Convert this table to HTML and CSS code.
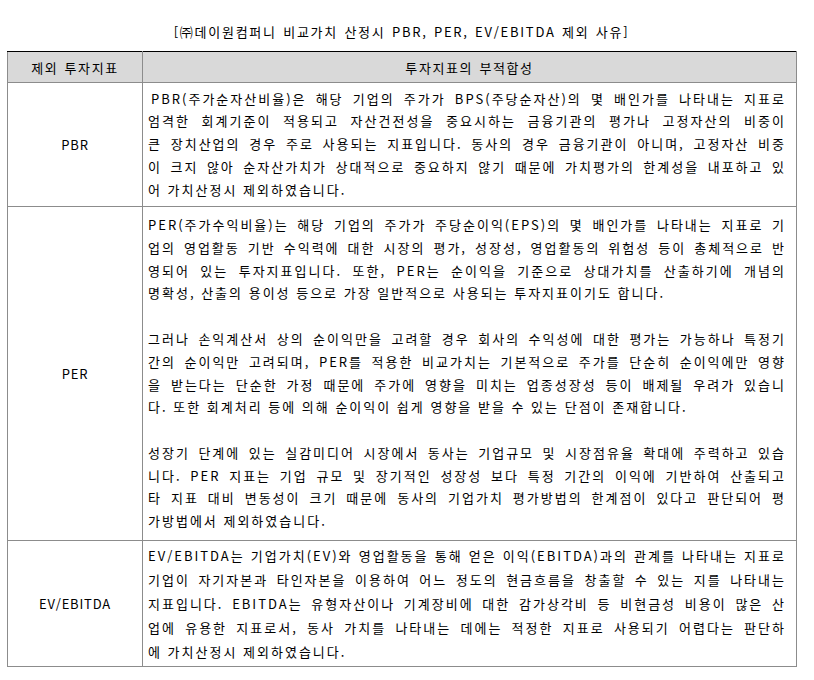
FILE: index.html
```html
<!DOCTYPE html>
<html lang="ko">
<head>
<meta charset="utf-8">
<title>비교가치 산정시 제외 사유</title>
<link rel="stylesheet" href="styles.css">
</head>
<body>
<div class="page">
  <h1 class="title">[㈜데이원컴퍼니 비교가치 산정시 PBR, PER, EV/EBITDA 제외 사유]</h1>
  <table class="grid">
    <colgroup><col class="c1"><col class="c2"></colgroup>
    <thead>
      <tr><th>제외 투자지표</th><th>투자지표의 부적합성</th></tr>
    </thead>
    <tbody>
      <tr class="r-pbr">
        <td class="name">PBR</td>
        <td class="desc">
          <p><span class="ln full indent">PBR(주가순자산비율)은 해당 기업의 주가가 BPS(주당순자산)의 몇 배인가를 나타내는 지표로</span><span class="ln full">엄격한 회계기준이 적용되고 자산건전성을 중요시하는 금융기관의 평가나 고정자산의 비중이</span><span class="ln full">큰 장치산업의 경우 주로 사용되는 지표입니다. 동사의 경우 금융기관이 아니며, 고정자산 비중</span><span class="ln full">이 크지 않아 순자산가치가 상대적으로 중요하지 않기 때문에 가치평가의 한계성을 내포하고 있</span><span class="ln">어 가치산정시 제외하였습니다.</span></p>
        </td>
      </tr>
      <tr class="r-per">
        <td class="name">PER</td>
        <td class="desc">
          <p><span class="ln full">PER(주가수익비율)는 해당 기업의 주가가 주당순이익(EPS)의 몇 배인가를 나타내는 지표로 기</span><span class="ln full">업의 영업활동 기반 수익력에 대한 시장의 평가, 성장성, 영업활동의 위험성 등이 총체적으로 반</span><span class="ln full">영되어 있는 투자지표입니다. 또한, PER는 순이익을 기준으로 상대가치를 산출하기에 개념의</span><span class="ln">명확성, 산출의 용이성 등으로 가장 일반적으로 사용되는 투자지표이기도 합니다.</span></p>
          <p><span class="ln full">그러나 손익계산서 상의 순이익만을 고려할 경우 회사의 수익성에 대한 평가는 가능하나 특정기</span><span class="ln full">간의 순이익만 고려되며, PER를 적용한 비교가치는 기본적으로 주가를 단순히 순이익에만 영향</span><span class="ln full">을 받는다는 단순한 가정 때문에 주가에 영향을 미치는 업종성장성 등이 배제될 우려가 있습니</span><span class="ln">다. 또한 회계처리 등에 의해 순이익이 쉽게 영향을 받을 수 있는 단점이 존재합니다.</span></p>
          <p><span class="ln full">성장기 단계에 있는 실감미디어 시장에서 동사는 기업규모 및 시장점유율 확대에 주력하고 있습</span><span class="ln full">니다. PER 지표는 기업 규모 및 장기적인 성장성 보다 특정 기간의 이익에 기반하여 산출되고</span><span class="ln full">타 지표 대비 변동성이 크기 때문에 동사의 기업가치 평가방법의 한계점이 있다고 판단되어 평</span><span class="ln">가방법에서 제외하였습니다.</span></p>
        </td>
      </tr>
      <tr class="r-ev">
        <td class="name">EV/EBITDA</td>
        <td class="desc">
          <p><span class="ln full">EV/EBITDA는 기업가치(EV)와 영업활동을 통해 얻은 이익(EBITDA)과의 관계를 나타내는 지표로</span><span class="ln full">기업이 자기자본과 타인자본을 이용하여 어느 정도의 현금흐름을 창출할 수 있는 지를 나타내는</span><span class="ln full">지표입니다. EBITDA는 유형자산이나 기계장비에 대한 감가상각비 등 비현금성 비용이 많은 산</span><span class="ln full">업에 유용한 지표로서, 동사 가치를 나타내는 데에는 적정한 지표로 사용되기 어렵다는 판단하</span><span class="ln">에 가치산정시 제외하였습니다.</span></p>
        </td>
      </tr>
    </tbody>
  </table>
</div>
</body>
</html>
```
FILE: styles.css
```css
html, body {
  margin: 0;
  padding: 0;
  background: #ffffff;
}
body {
  font-family: "Noto Sans CJK KR", "Noto Sans", sans-serif;
  font-size: 13px;
  color: #000000;
}
.page {
  padding: 21px 0 0 7px;
  width: 789px;
}
.title {
  margin: 0 0 8px 0;
  font-size: 13px;
  font-weight: normal;
  text-align: center;
  line-height: 22px;
  letter-spacing: 1.75px;
  word-spacing: 1px;
}
.grid {
  width: 789px;
  border-collapse: collapse;
  border: 1px solid #000000;
  table-layout: fixed;
}
.c1 { width: 135px; }
.c2 { width: 654px; }
.grid th {
  background: #d9d9d9;
  font-weight: normal;
  height: 30px;
  padding: 0;
  text-align: center;
  border: 1px solid #8c8c8c;
  border-top: 1px solid #000000;
  letter-spacing: 1.6px;
  word-spacing: 1px;
}
.grid td {
  border: 1px solid #8c8c8c;
  padding: 0;
}
.name {
  text-align: center;
  vertical-align: middle;
  letter-spacing: 0.8px;
}
.desc {
  vertical-align: middle;
  padding: 0 0 0 5px !important;
  letter-spacing: 2px;
  word-spacing: 0;
}
.r-pbr td { height: 123px; }
.r-per td { height: 333px; }
.r-ev td { height: 125px; }
.desc p {
  margin: 0;
  line-height: 22.8px;
}
.desc p + p {
  margin-top: 22.8px;
}
.r-ev .desc p {
  line-height: 24px;
}
.ln {
  display: block;
  white-space: nowrap;
}
.ln.full {
  width: 638px;
  text-align: justify;
  text-align-last: justify;
}
.ln.indent {
  width: 635px;
  padding-left: 3px;
}
```
